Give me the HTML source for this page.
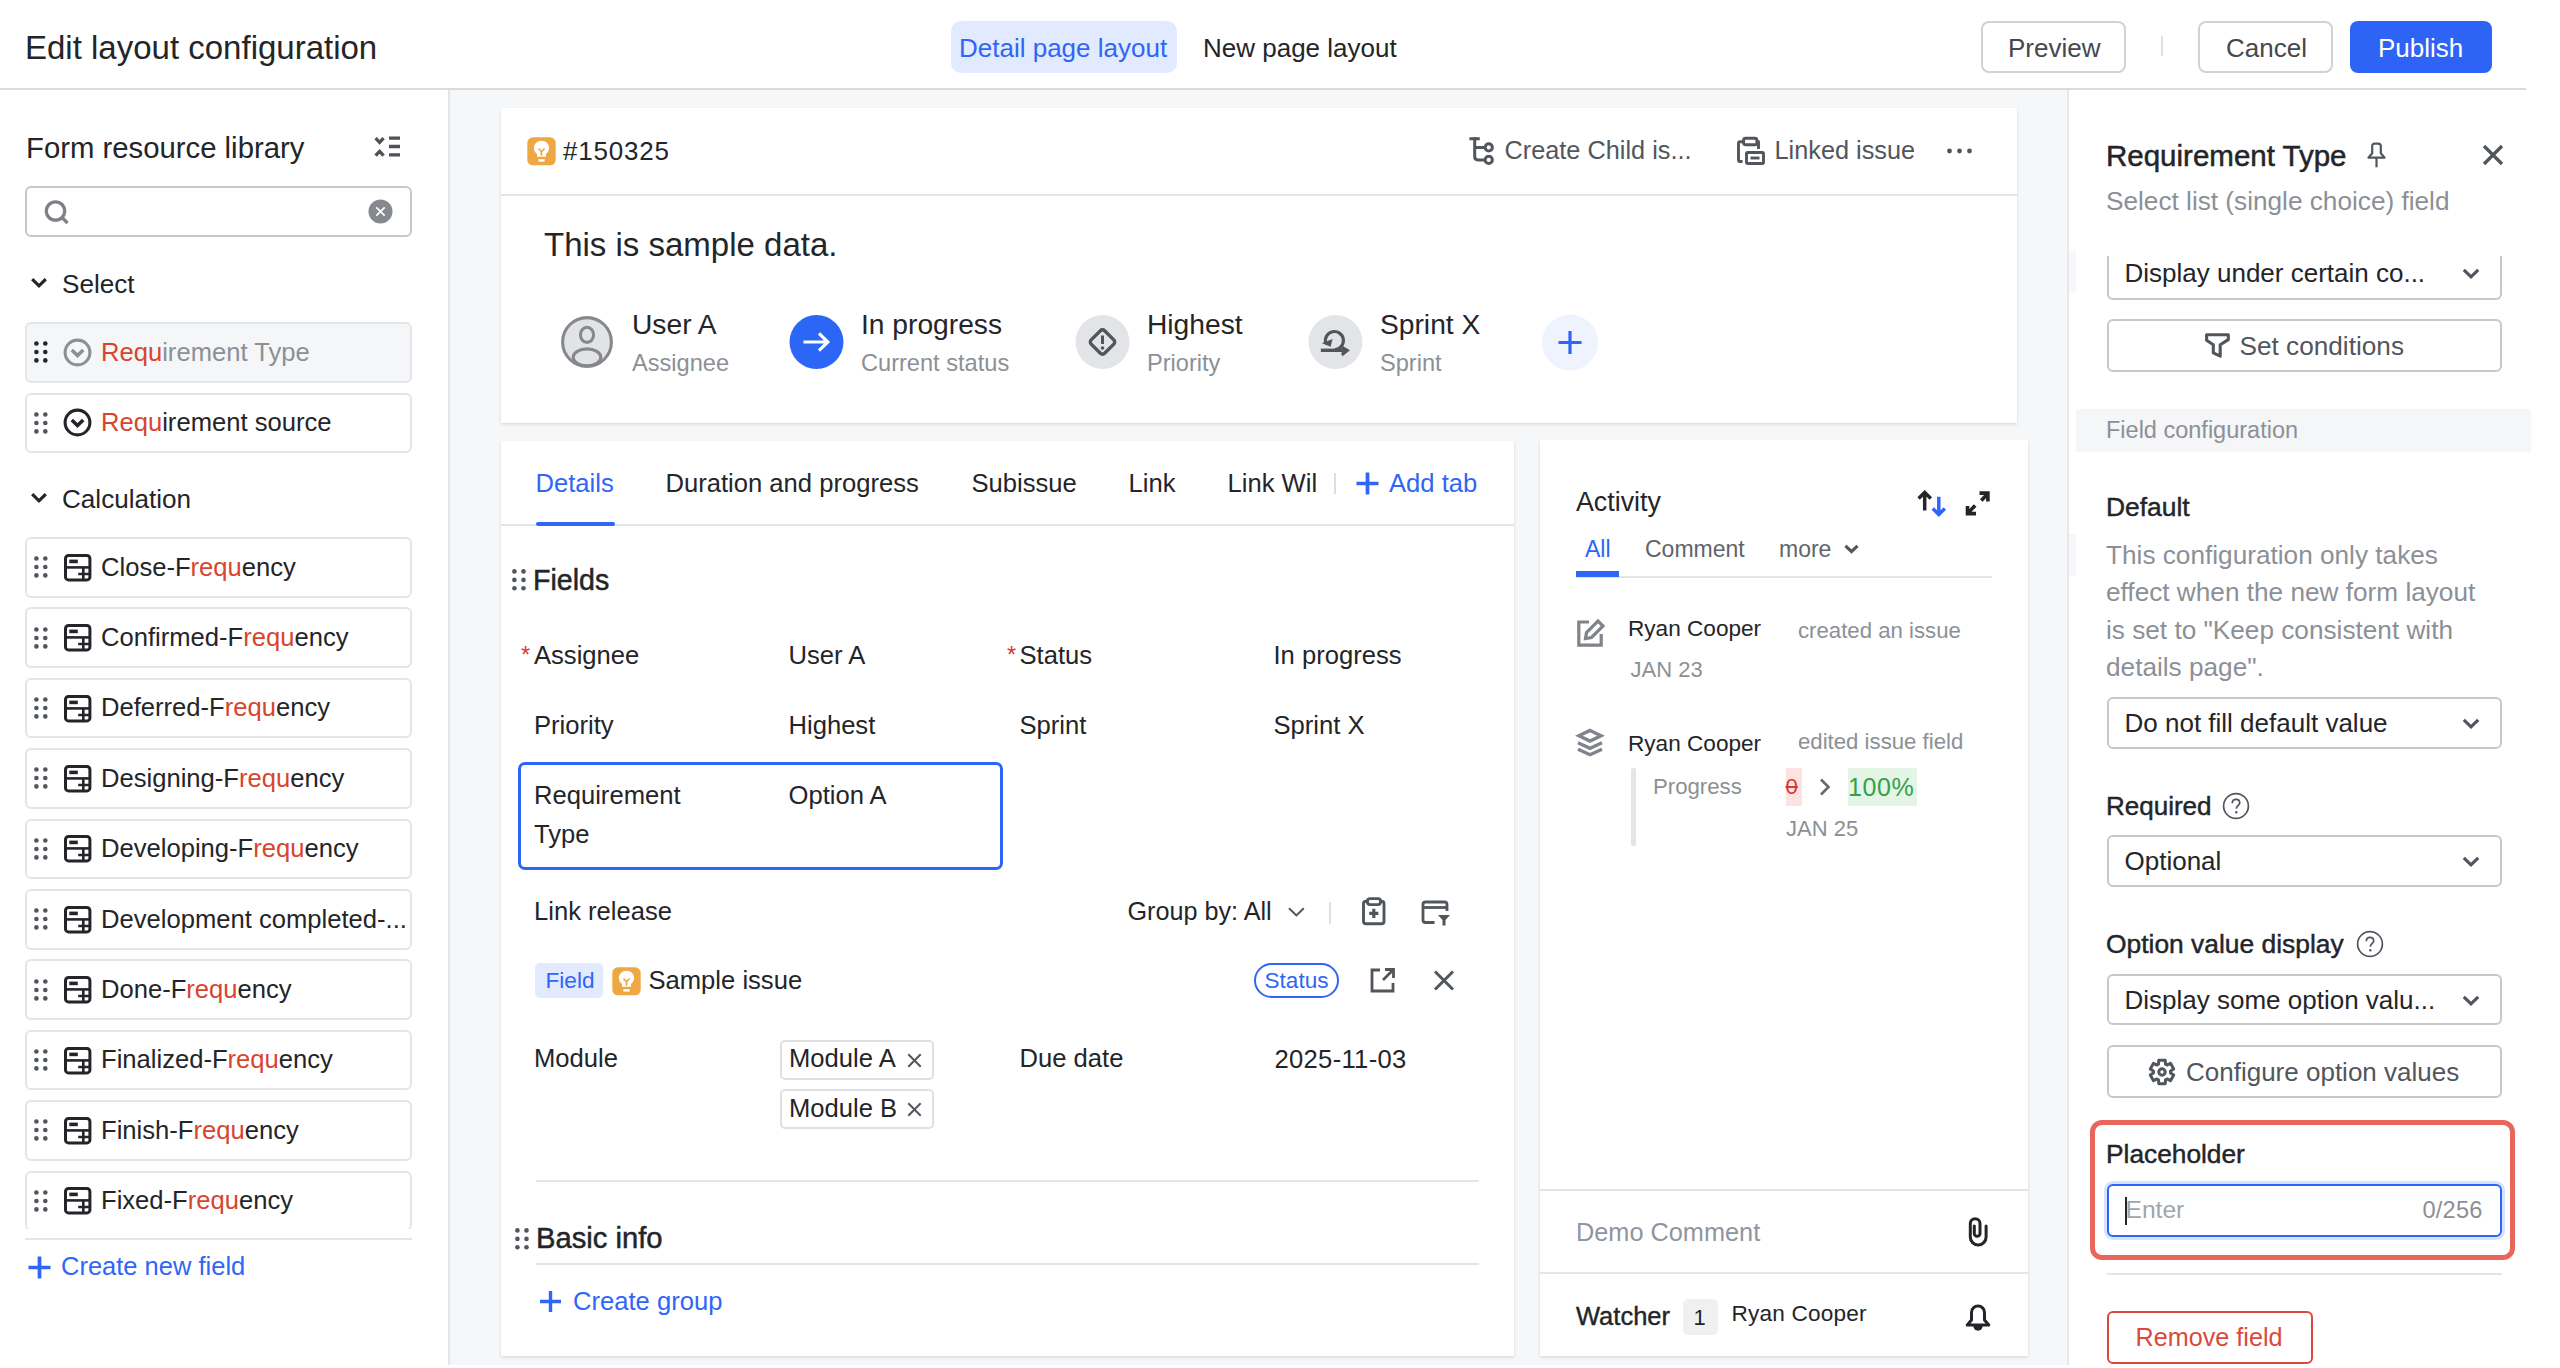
<!DOCTYPE html><html><head><meta charset="utf-8"><style>
html,body{margin:0;padding:0;width:2560px;height:1368px;overflow:hidden;background:#fff;font-family:"Liberation Sans",sans-serif;}
.t{position:absolute;white-space:nowrap;line-height:1;}
svg{display:block}
</style></head><body>
<div style="position:absolute;left:449px;top:90px;width:1619px;height:1275px;box-sizing:border-box;background:#f6f7f9;"></div>
<div style="position:absolute;left:448px;top:90px;width:2px;height:1275px;box-sizing:border-box;background:#e4e6e9;"></div>
<div style="position:absolute;left:2067px;top:90px;width:2px;height:1275px;box-sizing:border-box;background:#e6e8eb;"></div>
<div style="position:absolute;left:0px;top:88px;width:2526px;height:2px;box-sizing:border-box;background:#d9dbde;"></div>
<div class="t" style="left:25.0px;top:31.07px;font-size:33px;color:#232529;font-weight:400;">Edit layout configuration</div>
<div style="position:absolute;left:951px;top:21px;width:226px;height:52px;box-sizing:border-box;background:#e1eaff;border-radius:10px;"></div>
<div class="t" style="left:959.0px;top:34.99px;font-size:26px;color:#2f66f6;font-weight:400;">Detail page layout</div>
<div class="t" style="left:1203.0px;top:34.99px;font-size:26px;color:#232529;font-weight:400;">New page layout</div>
<div style="position:absolute;left:1981px;top:21px;width:145px;height:52px;box-sizing:border-box;border:2px solid #d0d3d6;border-radius:8px;"></div>
<div class="t" style="left:2008.0px;top:34.99px;font-size:26px;color:#45484d;font-weight:400;">Preview</div>
<div style="position:absolute;left:2161px;top:36px;width:2px;height:20px;box-sizing:border-box;background:#dee0e3;"></div>
<div style="position:absolute;left:2198px;top:21px;width:135px;height:52px;box-sizing:border-box;border:2px solid #d0d3d6;border-radius:8px;"></div>
<div class="t" style="left:2226.0px;top:34.99px;font-size:26px;color:#45484d;font-weight:400;">Cancel</div>
<div style="position:absolute;left:2350px;top:21px;width:142px;height:52px;box-sizing:border-box;background:#2d64f5;border-radius:8px;"></div>
<div class="t" style="left:2378.0px;top:34.99px;font-size:26px;color:#ffffff;font-weight:400;">Publish</div>
<div class="t" style="left:26.0px;top:132.60px;font-size:29.3px;color:#232529;font-weight:400;">Form resource library</div>
<svg style="position:absolute;left:374px;top:136px" width="28" height="22" viewBox="0 0 28 22" fill="none"><g stroke="#4e5258" stroke-width="3.4"><path d="M1.6 2.2L5.6 6.4L9.6 2.2"/><path d="M1.6 19.6L5.6 15.4L9.6 19.6"/><path d="M15 2.1H26M15 10.5H26M15 18.9H26"/></g></svg>
<div style="position:absolute;left:25px;top:186px;width:387px;height:51px;box-sizing:border-box;border:2px solid #c6c8cc;border-radius:6px;"></div>
<svg style="position:absolute;left:42px;top:198px" width="28" height="28" viewBox="0 0 28 28" fill="none"><circle cx="13.5" cy="13" r="9.2" stroke="#7d8086" stroke-width="3.2"/><path d="M20 19.5L25.5 25" stroke="#7d8086" stroke-width="3.2"/></svg>
<svg style="position:absolute;left:368px;top:199px" width="26" height="26" viewBox="0 0 26 26" fill="none"><circle cx="12.5" cy="12.5" r="12" fill="#86898e"/><path d="M8.3 8.3L16.7 16.7M16.7 8.3L8.3 16.7" stroke="#fff" stroke-width="1.7"/></svg>
<svg style="position:absolute;left:30px;top:277px" width="18" height="12" viewBox="0 0 18 12" fill="none"><path d="M2.2 2.2L9 8.8L15.8 2.2" stroke="#232529" stroke-width="3.2"/></svg>
<div class="t" style="left:62.0px;top:271.01px;font-size:26.1px;color:#232529;font-weight:400;">Select</div>
<div style="position:absolute;left:25px;top:322px;width:387px;height:60.5px;box-sizing:border-box;background:#f5f6f7;border:2px solid #e3e5e8;border-radius:6px;"></div>
<svg style="position:absolute;left:34px;top:341.2px" width="14" height="22" viewBox="0 0 14 22" fill="none"><circle cx="2.4" cy="2.5" r="2.3" fill="#232529"/><circle cx="2.4" cy="11" r="2.3" fill="#232529"/><circle cx="2.4" cy="19.4" r="2.3" fill="#232529"/><circle cx="11.3" cy="2.5" r="2.3" fill="#232529"/><circle cx="11.3" cy="11" r="2.3" fill="#232529"/><circle cx="11.3" cy="19.4" r="2.3" fill="#232529"/></svg>
<svg style="position:absolute;left:63px;top:337.7px" width="29" height="29" viewBox="0 0 29 29" fill="none"><circle cx="14.5" cy="14.5" r="12.4" stroke="#8c9096" stroke-width="3.1"/><path d="M8.8 12L14.5 17.5L20.2 12" stroke="#8c9096" stroke-width="3.6"/></svg>
<div class="t" style="left:101.0px;top:339.53px;font-size:25.6px;color:#8c9096;font-weight:400;"><span style="color:#d8452e">Requ</span>irement Type</div>
<div style="position:absolute;left:25px;top:392.5px;width:387px;height:60.5px;box-sizing:border-box;background:#ffffff;border:2px solid #e3e5e8;border-radius:6px;"></div>
<svg style="position:absolute;left:34px;top:411.7px" width="14" height="22" viewBox="0 0 14 22" fill="none"><circle cx="2.4" cy="2.5" r="2.3" fill="#51565d"/><circle cx="2.4" cy="11" r="2.3" fill="#51565d"/><circle cx="2.4" cy="19.4" r="2.3" fill="#51565d"/><circle cx="11.3" cy="2.5" r="2.3" fill="#51565d"/><circle cx="11.3" cy="11" r="2.3" fill="#51565d"/><circle cx="11.3" cy="19.4" r="2.3" fill="#51565d"/></svg>
<svg style="position:absolute;left:63px;top:408.2px" width="29" height="29" viewBox="0 0 29 29" fill="none"><circle cx="14.5" cy="14.5" r="12.4" stroke="#232529" stroke-width="3.1"/><path d="M8.8 12L14.5 17.5L20.2 12" stroke="#232529" stroke-width="3.6"/></svg>
<div class="t" style="left:101.0px;top:410.03px;font-size:25.6px;color:#232529;font-weight:400;"><span style="color:#d8452e">Requ</span>irement source</div>
<svg style="position:absolute;left:30px;top:492px" width="18" height="12" viewBox="0 0 18 12" fill="none"><path d="M2.2 2.2L9 8.8L15.8 2.2" stroke="#232529" stroke-width="3.2"/></svg>
<div class="t" style="left:62.0px;top:486.01px;font-size:26.1px;color:#232529;font-weight:400;">Calculation</div>
<div style="position:absolute;left:25px;top:537.0px;width:387px;height:60.5px;box-sizing:border-box;background:#ffffff;border:2px solid #e3e5e8;border-radius:6px;"></div>
<svg style="position:absolute;left:34px;top:556.2px" width="14" height="22" viewBox="0 0 14 22" fill="none"><circle cx="2.4" cy="2.5" r="2.3" fill="#51565d"/><circle cx="2.4" cy="11" r="2.3" fill="#51565d"/><circle cx="2.4" cy="19.4" r="2.3" fill="#51565d"/><circle cx="11.3" cy="2.5" r="2.3" fill="#51565d"/><circle cx="11.3" cy="11" r="2.3" fill="#51565d"/><circle cx="11.3" cy="19.4" r="2.3" fill="#51565d"/></svg>
<svg style="position:absolute;left:63px;top:552.7px" width="29" height="29" viewBox="0 0 29 29" fill="none"><rect x="2.5" y="2.5" width="24.4" height="24.4" rx="3" stroke="#232529" stroke-width="3"/><path d="M2.5 14.4H27" stroke="#232529" stroke-width="2.6"/><path d="M6.3 8.4H14.8" stroke="#232529" stroke-width="3.6"/><path d="M20.3 14.4V27M15.2 21H27" stroke="#232529" stroke-width="2.6"/></svg>
<div class="t" style="left:101.0px;top:554.53px;font-size:25.6px;color:#232529;font-weight:400;">Close-F<span style="color:#d8452e">requ</span>ency</div>
<div style="position:absolute;left:25px;top:607.4px;width:387px;height:60.5px;box-sizing:border-box;background:#ffffff;border:2px solid #e3e5e8;border-radius:6px;"></div>
<svg style="position:absolute;left:34px;top:626.6px" width="14" height="22" viewBox="0 0 14 22" fill="none"><circle cx="2.4" cy="2.5" r="2.3" fill="#51565d"/><circle cx="2.4" cy="11" r="2.3" fill="#51565d"/><circle cx="2.4" cy="19.4" r="2.3" fill="#51565d"/><circle cx="11.3" cy="2.5" r="2.3" fill="#51565d"/><circle cx="11.3" cy="11" r="2.3" fill="#51565d"/><circle cx="11.3" cy="19.4" r="2.3" fill="#51565d"/></svg>
<svg style="position:absolute;left:63px;top:623.1px" width="29" height="29" viewBox="0 0 29 29" fill="none"><rect x="2.5" y="2.5" width="24.4" height="24.4" rx="3" stroke="#232529" stroke-width="3"/><path d="M2.5 14.4H27" stroke="#232529" stroke-width="2.6"/><path d="M6.3 8.4H14.8" stroke="#232529" stroke-width="3.6"/><path d="M20.3 14.4V27M15.2 21H27" stroke="#232529" stroke-width="2.6"/></svg>
<div class="t" style="left:101.0px;top:624.93px;font-size:25.6px;color:#232529;font-weight:400;">Confirmed-F<span style="color:#d8452e">requ</span>ency</div>
<div style="position:absolute;left:25px;top:677.8px;width:387px;height:60.5px;box-sizing:border-box;background:#ffffff;border:2px solid #e3e5e8;border-radius:6px;"></div>
<svg style="position:absolute;left:34px;top:697.0px" width="14" height="22" viewBox="0 0 14 22" fill="none"><circle cx="2.4" cy="2.5" r="2.3" fill="#51565d"/><circle cx="2.4" cy="11" r="2.3" fill="#51565d"/><circle cx="2.4" cy="19.4" r="2.3" fill="#51565d"/><circle cx="11.3" cy="2.5" r="2.3" fill="#51565d"/><circle cx="11.3" cy="11" r="2.3" fill="#51565d"/><circle cx="11.3" cy="19.4" r="2.3" fill="#51565d"/></svg>
<svg style="position:absolute;left:63px;top:693.5px" width="29" height="29" viewBox="0 0 29 29" fill="none"><rect x="2.5" y="2.5" width="24.4" height="24.4" rx="3" stroke="#232529" stroke-width="3"/><path d="M2.5 14.4H27" stroke="#232529" stroke-width="2.6"/><path d="M6.3 8.4H14.8" stroke="#232529" stroke-width="3.6"/><path d="M20.3 14.4V27M15.2 21H27" stroke="#232529" stroke-width="2.6"/></svg>
<div class="t" style="left:101.0px;top:695.33px;font-size:25.6px;color:#232529;font-weight:400;">Deferred-F<span style="color:#d8452e">requ</span>ency</div>
<div style="position:absolute;left:25px;top:748.2px;width:387px;height:60.5px;box-sizing:border-box;background:#ffffff;border:2px solid #e3e5e8;border-radius:6px;"></div>
<svg style="position:absolute;left:34px;top:767.4000000000001px" width="14" height="22" viewBox="0 0 14 22" fill="none"><circle cx="2.4" cy="2.5" r="2.3" fill="#51565d"/><circle cx="2.4" cy="11" r="2.3" fill="#51565d"/><circle cx="2.4" cy="19.4" r="2.3" fill="#51565d"/><circle cx="11.3" cy="2.5" r="2.3" fill="#51565d"/><circle cx="11.3" cy="11" r="2.3" fill="#51565d"/><circle cx="11.3" cy="19.4" r="2.3" fill="#51565d"/></svg>
<svg style="position:absolute;left:63px;top:763.9000000000001px" width="29" height="29" viewBox="0 0 29 29" fill="none"><rect x="2.5" y="2.5" width="24.4" height="24.4" rx="3" stroke="#232529" stroke-width="3"/><path d="M2.5 14.4H27" stroke="#232529" stroke-width="2.6"/><path d="M6.3 8.4H14.8" stroke="#232529" stroke-width="3.6"/><path d="M20.3 14.4V27M15.2 21H27" stroke="#232529" stroke-width="2.6"/></svg>
<div class="t" style="left:101.0px;top:765.73px;font-size:25.6px;color:#232529;font-weight:400;">Designing-F<span style="color:#d8452e">requ</span>ency</div>
<div style="position:absolute;left:25px;top:818.6px;width:387px;height:60.5px;box-sizing:border-box;background:#ffffff;border:2px solid #e3e5e8;border-radius:6px;"></div>
<svg style="position:absolute;left:34px;top:837.8000000000001px" width="14" height="22" viewBox="0 0 14 22" fill="none"><circle cx="2.4" cy="2.5" r="2.3" fill="#51565d"/><circle cx="2.4" cy="11" r="2.3" fill="#51565d"/><circle cx="2.4" cy="19.4" r="2.3" fill="#51565d"/><circle cx="11.3" cy="2.5" r="2.3" fill="#51565d"/><circle cx="11.3" cy="11" r="2.3" fill="#51565d"/><circle cx="11.3" cy="19.4" r="2.3" fill="#51565d"/></svg>
<svg style="position:absolute;left:63px;top:834.3000000000001px" width="29" height="29" viewBox="0 0 29 29" fill="none"><rect x="2.5" y="2.5" width="24.4" height="24.4" rx="3" stroke="#232529" stroke-width="3"/><path d="M2.5 14.4H27" stroke="#232529" stroke-width="2.6"/><path d="M6.3 8.4H14.8" stroke="#232529" stroke-width="3.6"/><path d="M20.3 14.4V27M15.2 21H27" stroke="#232529" stroke-width="2.6"/></svg>
<div class="t" style="left:101.0px;top:836.13px;font-size:25.6px;color:#232529;font-weight:400;">Developing-F<span style="color:#d8452e">requ</span>ency</div>
<div style="position:absolute;left:25px;top:889.0px;width:387px;height:60.5px;box-sizing:border-box;background:#ffffff;border:2px solid #e3e5e8;border-radius:6px;"></div>
<svg style="position:absolute;left:34px;top:908.2px" width="14" height="22" viewBox="0 0 14 22" fill="none"><circle cx="2.4" cy="2.5" r="2.3" fill="#51565d"/><circle cx="2.4" cy="11" r="2.3" fill="#51565d"/><circle cx="2.4" cy="19.4" r="2.3" fill="#51565d"/><circle cx="11.3" cy="2.5" r="2.3" fill="#51565d"/><circle cx="11.3" cy="11" r="2.3" fill="#51565d"/><circle cx="11.3" cy="19.4" r="2.3" fill="#51565d"/></svg>
<svg style="position:absolute;left:63px;top:904.7px" width="29" height="29" viewBox="0 0 29 29" fill="none"><rect x="2.5" y="2.5" width="24.4" height="24.4" rx="3" stroke="#232529" stroke-width="3"/><path d="M2.5 14.4H27" stroke="#232529" stroke-width="2.6"/><path d="M6.3 8.4H14.8" stroke="#232529" stroke-width="3.6"/><path d="M20.3 14.4V27M15.2 21H27" stroke="#232529" stroke-width="2.6"/></svg>
<div class="t" style="left:101.0px;top:906.53px;font-size:25.6px;color:#232529;font-weight:400;">Development completed-...</div>
<div style="position:absolute;left:25px;top:959.4px;width:387px;height:60.5px;box-sizing:border-box;background:#ffffff;border:2px solid #e3e5e8;border-radius:6px;"></div>
<svg style="position:absolute;left:34px;top:978.6px" width="14" height="22" viewBox="0 0 14 22" fill="none"><circle cx="2.4" cy="2.5" r="2.3" fill="#51565d"/><circle cx="2.4" cy="11" r="2.3" fill="#51565d"/><circle cx="2.4" cy="19.4" r="2.3" fill="#51565d"/><circle cx="11.3" cy="2.5" r="2.3" fill="#51565d"/><circle cx="11.3" cy="11" r="2.3" fill="#51565d"/><circle cx="11.3" cy="19.4" r="2.3" fill="#51565d"/></svg>
<svg style="position:absolute;left:63px;top:975.1px" width="29" height="29" viewBox="0 0 29 29" fill="none"><rect x="2.5" y="2.5" width="24.4" height="24.4" rx="3" stroke="#232529" stroke-width="3"/><path d="M2.5 14.4H27" stroke="#232529" stroke-width="2.6"/><path d="M6.3 8.4H14.8" stroke="#232529" stroke-width="3.6"/><path d="M20.3 14.4V27M15.2 21H27" stroke="#232529" stroke-width="2.6"/></svg>
<div class="t" style="left:101.0px;top:976.93px;font-size:25.6px;color:#232529;font-weight:400;">Done-F<span style="color:#d8452e">requ</span>ency</div>
<div style="position:absolute;left:25px;top:1029.8px;width:387px;height:60.5px;box-sizing:border-box;background:#ffffff;border:2px solid #e3e5e8;border-radius:6px;"></div>
<svg style="position:absolute;left:34px;top:1049.0px" width="14" height="22" viewBox="0 0 14 22" fill="none"><circle cx="2.4" cy="2.5" r="2.3" fill="#51565d"/><circle cx="2.4" cy="11" r="2.3" fill="#51565d"/><circle cx="2.4" cy="19.4" r="2.3" fill="#51565d"/><circle cx="11.3" cy="2.5" r="2.3" fill="#51565d"/><circle cx="11.3" cy="11" r="2.3" fill="#51565d"/><circle cx="11.3" cy="19.4" r="2.3" fill="#51565d"/></svg>
<svg style="position:absolute;left:63px;top:1045.5px" width="29" height="29" viewBox="0 0 29 29" fill="none"><rect x="2.5" y="2.5" width="24.4" height="24.4" rx="3" stroke="#232529" stroke-width="3"/><path d="M2.5 14.4H27" stroke="#232529" stroke-width="2.6"/><path d="M6.3 8.4H14.8" stroke="#232529" stroke-width="3.6"/><path d="M20.3 14.4V27M15.2 21H27" stroke="#232529" stroke-width="2.6"/></svg>
<div class="t" style="left:101.0px;top:1047.33px;font-size:25.6px;color:#232529;font-weight:400;">Finalized-F<span style="color:#d8452e">requ</span>ency</div>
<div style="position:absolute;left:25px;top:1100.2px;width:387px;height:60.5px;box-sizing:border-box;background:#ffffff;border:2px solid #e3e5e8;border-radius:6px;"></div>
<svg style="position:absolute;left:34px;top:1119.4px" width="14" height="22" viewBox="0 0 14 22" fill="none"><circle cx="2.4" cy="2.5" r="2.3" fill="#51565d"/><circle cx="2.4" cy="11" r="2.3" fill="#51565d"/><circle cx="2.4" cy="19.4" r="2.3" fill="#51565d"/><circle cx="11.3" cy="2.5" r="2.3" fill="#51565d"/><circle cx="11.3" cy="11" r="2.3" fill="#51565d"/><circle cx="11.3" cy="19.4" r="2.3" fill="#51565d"/></svg>
<svg style="position:absolute;left:63px;top:1115.9px" width="29" height="29" viewBox="0 0 29 29" fill="none"><rect x="2.5" y="2.5" width="24.4" height="24.4" rx="3" stroke="#232529" stroke-width="3"/><path d="M2.5 14.4H27" stroke="#232529" stroke-width="2.6"/><path d="M6.3 8.4H14.8" stroke="#232529" stroke-width="3.6"/><path d="M20.3 14.4V27M15.2 21H27" stroke="#232529" stroke-width="2.6"/></svg>
<div class="t" style="left:101.0px;top:1117.73px;font-size:25.6px;color:#232529;font-weight:400;">Finish-F<span style="color:#d8452e">requ</span>ency</div>
<div style="position:absolute;left:25px;top:1170.6px;width:387px;height:60.5px;box-sizing:border-box;background:#ffffff;border:2px solid #e3e5e8;border-radius:6px;"></div>
<svg style="position:absolute;left:34px;top:1189.8px" width="14" height="22" viewBox="0 0 14 22" fill="none"><circle cx="2.4" cy="2.5" r="2.3" fill="#51565d"/><circle cx="2.4" cy="11" r="2.3" fill="#51565d"/><circle cx="2.4" cy="19.4" r="2.3" fill="#51565d"/><circle cx="11.3" cy="2.5" r="2.3" fill="#51565d"/><circle cx="11.3" cy="11" r="2.3" fill="#51565d"/><circle cx="11.3" cy="19.4" r="2.3" fill="#51565d"/></svg>
<svg style="position:absolute;left:63px;top:1186.3px" width="29" height="29" viewBox="0 0 29 29" fill="none"><rect x="2.5" y="2.5" width="24.4" height="24.4" rx="3" stroke="#232529" stroke-width="3"/><path d="M2.5 14.4H27" stroke="#232529" stroke-width="2.6"/><path d="M6.3 8.4H14.8" stroke="#232529" stroke-width="3.6"/><path d="M20.3 14.4V27M15.2 21H27" stroke="#232529" stroke-width="2.6"/></svg>
<div class="t" style="left:101.0px;top:1188.13px;font-size:25.6px;color:#232529;font-weight:400;">Fixed-F<span style="color:#d8452e">requ</span>ency</div>
<div style="position:absolute;left:20px;top:1228.5px;width:400px;height:10px;box-sizing:border-box;background:#fff;"></div>
<div style="position:absolute;left:25px;top:1238px;width:387px;height:2px;box-sizing:border-box;background:#e3e5e8;"></div>
<svg style="position:absolute;left:27px;top:1255px" width="25" height="25" viewBox="0 0 25 25" fill="none"><path d="M12.5 1.5V23.5M1.5 12.5H23.5" stroke="#2f66f6" stroke-width="3.7"/></svg>
<div class="t" style="left:61.0px;top:1254.41px;font-size:25.5px;color:#2f66f6;font-weight:400;">Create new field</div>
<div style="position:absolute;left:501px;top:108px;width:1516px;height:315px;box-sizing:border-box;background:#fff;box-shadow:0 1.5px 3px rgba(31,35,41,0.13), 0 0 1px rgba(31,35,41,0.08);"></div>
<div style="position:absolute;left:501px;top:194px;width:1516px;height:2px;box-sizing:border-box;background:#e3e5e8;"></div>
<svg style="position:absolute;left:527px;top:137px" width="29" height="29" viewBox="0 0 29 29" fill="none"><rect x="0.3" y="0.3" width="28.4" height="28" rx="5.5" fill="#eea843"/><path d="M14.5 3.8c-4.3 0-7.6 3.2-7.6 7.3 0 2.6 1.3 4.5 3.1 5.9v2.8h9v-2.8c1.8-1.4 3.1-3.3 3.1-5.9 0-4.1-3.3-7.3-7.6-7.3z" fill="#fff"/><path d="M11.4 11.5l3.1 3.3 3.1-3.3M14.5 14.8v4" stroke="#eea843" stroke-width="1.7"/><rect x="11.4" y="22.2" width="6.2" height="2.4" fill="#fff"/></svg>
<div class="t" style="left:563.0px;top:137.99px;font-size:26px;color:#232529;font-weight:400;letter-spacing:0.8px;">#150325</div>
<svg style="position:absolute;left:1467px;top:136px" width="30" height="30" viewBox="0 0 30 30" fill="none"><g stroke="#51565d" stroke-width="3" fill="none"><path d="M2.4 2.75H12.8"/><path d="M7.7 1.2V20.5Q7.7 23.9 11 23.9H17.6M7.7 11.4H17.6"/><circle cx="21.75" cy="11.4" r="3.6"/><circle cx="21.75" cy="23.9" r="3.6"/></g></svg>
<div class="t" style="left:1504.5px;top:138.48px;font-size:25.3px;color:#51565d;font-weight:400;">Create Child is...</div>
<svg style="position:absolute;left:1735px;top:135px" width="32" height="32" viewBox="0 0 32 32" fill="none"><g stroke="#51565d" stroke-width="2.9" fill="none" stroke-linejoin="round"><path d="M8.6 6.8H5Q3.5 6.8 3.5 8.3V25Q3.5 26.5 5 26.5H7.5"/><rect x="8.6" y="3.3" width="13.3" height="6.4" rx="2"/><path d="M21.9 6.8H23.5V14"/><rect x="11.5" y="17.5" width="17" height="11" rx="1.2"/><path d="M15.5 23H24.5"/></g></svg>
<div class="t" style="left:1774.5px;top:138.48px;font-size:25.3px;color:#51565d;font-weight:400;">Linked issue</div>
<svg style="position:absolute;left:1946px;top:145px" width="28" height="12" viewBox="0 0 28 12" fill="none"><circle cx="3.5" cy="6" r="2.4" fill="#51565d"/><circle cx="13.5" cy="6" r="2.4" fill="#51565d"/><circle cx="23.5" cy="6" r="2.4" fill="#51565d"/></svg>
<div class="t" style="left:544.0px;top:227.57px;font-size:33px;color:#232529;font-weight:400;">This is sample data.</div>
<svg style="position:absolute;left:560px;top:315px" width="54" height="54" viewBox="0 0 54 54" fill="none"><defs><clipPath id="avc"><circle cx="27" cy="27" r="24"/></clipPath></defs><circle cx="27" cy="27" r="24.4" fill="#e2e3e6" stroke="#86888c" stroke-width="3.1"/><g clip-path="url(#avc)"><ellipse cx="27" cy="19.8" rx="6.6" ry="7.6" stroke="#86888c" stroke-width="3.1" fill="none"/><ellipse cx="27" cy="42.3" rx="13.8" ry="8.4" stroke="#86888c" stroke-width="3.1" fill="none"/></g></svg>
<div class="t" style="left:632.0px;top:310.13px;font-size:28.2px;color:#232529;font-weight:400;">User A</div>
<div class="t" style="left:632.0px;top:352.32px;font-size:23.6px;color:#8c9096;font-weight:400;">Assignee</div>
<svg style="position:absolute;left:789px;top:315px" width="55" height="55" viewBox="0 0 55 55" fill="none"><circle cx="27.5" cy="27" r="27" fill="#2b66f6"/><path d="M14.5 27H39M30 18.3L38.8 27L30 35.7" stroke="#fff" stroke-width="3.2"/></svg>
<div class="t" style="left:861.0px;top:310.13px;font-size:28.2px;color:#232529;font-weight:400;">In progress</div>
<div class="t" style="left:861.0px;top:352.32px;font-size:23.6px;color:#8c9096;font-weight:400;">Current status</div>
<svg style="position:absolute;left:1075px;top:315px" width="55" height="55" viewBox="0 0 55 55" fill="none"><circle cx="27.5" cy="27" r="27" fill="#e3e4e7"/><rect x="18" y="17.5" width="19" height="19" rx="3" transform="rotate(45 27.5 27)" stroke="#51565d" stroke-width="3.4" fill="none"/><path d="M27.5 20.5V29" stroke="#51565d" stroke-width="3"/><circle cx="27.5" cy="33" r="1.8" fill="#51565d"/></svg>
<div class="t" style="left:1147.0px;top:310.13px;font-size:28.2px;color:#232529;font-weight:400;">Highest</div>
<div class="t" style="left:1147.0px;top:352.32px;font-size:23.6px;color:#8c9096;font-weight:400;">Priority</div>
<svg style="position:absolute;left:1308px;top:315px" width="55" height="55" viewBox="0 0 55 55" fill="none"><circle cx="27.5" cy="27" r="27" fill="#e3e4e7"/><path d="M17.8 28.2A9 9 0 1 1 27 34.5" stroke="#51565d" stroke-width="3.2" fill="none"/><path d="M13.8 28.3L22.6 31.8L24.6 24Z" fill="#51565d"/><path d="M12.8 35.3H37" stroke="#51565d" stroke-width="3.4"/><path d="M33.5 30.2L42 35.3L34.5 41.2L33 38.5L35.8 35.3L32 32.2Z" fill="#51565d"/></svg>
<div class="t" style="left:1380.0px;top:310.13px;font-size:28.2px;color:#232529;font-weight:400;">Sprint X</div>
<div class="t" style="left:1380.0px;top:352.32px;font-size:23.6px;color:#8c9096;font-weight:400;">Sprint</div>
<svg style="position:absolute;left:1541px;top:314px" width="58" height="58" viewBox="0 0 58 58" fill="none"><circle cx="29" cy="28.5" r="28" fill="#eef3fe"/><path d="M29 17V40M17.5 28.5H40.5" stroke="#2f66f6" stroke-width="3.2"/></svg>
<div style="position:absolute;left:501px;top:441px;width:1013px;height:915px;box-sizing:border-box;background:#fff;box-shadow:0 1.5px 3px rgba(31,35,41,0.13), 0 0 1px rgba(31,35,41,0.08);"></div>
<div style="position:absolute;left:501px;top:524px;width:1013px;height:2px;box-sizing:border-box;background:#e3e5e8;"></div>
<div class="t" style="left:535.5px;top:470.63px;font-size:25.6px;color:#2f66f6;font-weight:400;">Details</div>
<div style="position:absolute;left:536px;top:522px;width:78.5px;height:4px;box-sizing:border-box;background:#2f66f6;border-radius:2px;"></div>
<div class="t" style="left:665.5px;top:470.63px;font-size:25.6px;color:#232529;font-weight:400;">Duration and progress</div>
<div class="t" style="left:971.5px;top:470.63px;font-size:25.6px;color:#232529;font-weight:400;">Subissue</div>
<div class="t" style="left:1128.5px;top:470.63px;font-size:25.6px;color:#232529;font-weight:400;">Link</div>
<div class="t" style="left:1227.5px;top:470.63px;font-size:25.6px;color:#232529;font-weight:400;">Link Wil</div>
<div style="position:absolute;left:1334.3px;top:473px;width:1.6px;height:21px;box-sizing:border-box;background:#dcdee2;"></div>
<svg style="position:absolute;left:1355px;top:471px" width="25" height="25" viewBox="0 0 25 25" fill="none"><path d="M12.5 1.5V23.5M1.5 12.5H23.5" stroke="#2f66f6" stroke-width="3.7"/></svg>
<div class="t" style="left:1389.0px;top:470.63px;font-size:25.6px;color:#2f66f6;font-weight:400;">Add tab</div>
<svg style="position:absolute;left:512px;top:569px" width="14" height="22" viewBox="0 0 14 22" fill="none"><circle cx="2.4" cy="2.4" r="2.3" fill="#51565d"/><circle cx="2.4" cy="10.9" r="2.3" fill="#51565d"/><circle cx="2.4" cy="19.2" r="2.3" fill="#51565d"/><circle cx="11.5" cy="2.4" r="2.3" fill="#51565d"/><circle cx="11.5" cy="10.9" r="2.3" fill="#51565d"/><circle cx="11.5" cy="19.2" r="2.3" fill="#51565d"/></svg>
<div class="t" style="left:533.0px;top:565.79px;font-size:28.6px;color:#232529;font-weight:400;-webkit-text-stroke:0.5px #232529;">Fields</div>
<div class="t" style="left:521.0px;top:644.22px;font-size:23.6px;color:#d83931;font-weight:400;">*</div>
<div class="t" style="left:534.0px;top:642.83px;font-size:25.6px;color:#232529;font-weight:400;">Assignee</div>
<div class="t" style="left:788.5px;top:642.83px;font-size:25.6px;color:#232529;font-weight:400;">User A</div>
<div class="t" style="left:1007.0px;top:644.22px;font-size:23.6px;color:#d83931;font-weight:400;">*</div>
<div class="t" style="left:1019.5px;top:642.83px;font-size:25.6px;color:#232529;font-weight:400;">Status</div>
<div class="t" style="left:1273.5px;top:642.83px;font-size:25.6px;color:#232529;font-weight:400;">In progress</div>
<div class="t" style="left:534.0px;top:712.93px;font-size:25.6px;color:#232529;font-weight:400;">Priority</div>
<div class="t" style="left:788.5px;top:712.93px;font-size:25.6px;color:#232529;font-weight:400;">Highest</div>
<div class="t" style="left:1019.5px;top:712.93px;font-size:25.6px;color:#232529;font-weight:400;">Sprint</div>
<div class="t" style="left:1273.5px;top:712.93px;font-size:25.6px;color:#232529;font-weight:400;">Sprint X</div>
<div style="position:absolute;left:517.5px;top:761.5px;width:485px;height:108px;box-sizing:border-box;border:3.5px solid #2b66f6;border-radius:7px;"></div>
<div class="t" style="left:534.0px;top:783.23px;font-size:25.6px;color:#232529;font-weight:400;">Requirement</div>
<div class="t" style="left:534.0px;top:821.83px;font-size:25.6px;color:#232529;font-weight:400;">Type</div>
<div class="t" style="left:788.5px;top:783.23px;font-size:25.6px;color:#232529;font-weight:400;">Option A</div>
<div class="t" style="left:534.0px;top:899.43px;font-size:25.6px;color:#232529;font-weight:400;">Link release</div>
<div class="t" style="left:1127.5px;top:899.17px;font-size:25.2px;color:#232529;font-weight:400;">Group by: All</div>
<svg style="position:absolute;left:1287px;top:906px" width="19" height="12" viewBox="0 0 19 12" fill="none"><path d="M2 2.2L9.4 9.4L16.8 2.2" stroke="#51565d" stroke-width="2"/></svg>
<div style="position:absolute;left:1329px;top:902px;width:2px;height:22px;box-sizing:border-box;background:#dee0e3;"></div>
<svg style="position:absolute;left:1360px;top:896px" width="28" height="32" viewBox="0 0 28 32" fill="none"><g stroke="#51565d" stroke-width="2.9" fill="none" stroke-linejoin="round"><path d="M7.5 5.2H6Q3.5 5.2 3.5 7.7V25.3Q3.5 27.8 6 27.8H21.5Q24 27.8 24 25.3V7.7Q24 5.2 21.5 5.2H20.5"/><rect x="7.5" y="2.6" width="13" height="6" rx="2.5"/></g><path d="M13.8 12.8V22M9.2 17.4H18.4" stroke="#51565d" stroke-width="3.2"/></svg>
<svg style="position:absolute;left:1419px;top:898px" width="32" height="30" viewBox="0 0 32 30" fill="none"><g stroke="#51565d" stroke-width="2.8" fill="none"><path d="M15.5 24.5H6.5Q4 24.5 4 22V6.5Q4 4 6.5 4H25.5Q28 4 28 6.5V13"/><path d="M4 9.5H28"/></g><path d="M19 17H31L26.5 22V27.5H23.5V22Z" fill="#51565d"/></svg>
<div style="position:absolute;left:535px;top:963px;width:68px;height:35px;box-sizing:border-box;background:#e1eaff;border-radius:5px;"></div>
<div class="t" style="left:545.5px;top:969.57px;font-size:22.6px;color:#2f66f6;font-weight:400;">Field</div>
<svg style="position:absolute;left:612px;top:966.5px" width="29" height="29" viewBox="0 0 29 29" fill="none"><rect x="0.3" y="0.3" width="28.4" height="28" rx="5.5" fill="#eea843"/><path d="M14.5 3.8c-4.3 0-7.6 3.2-7.6 7.3 0 2.6 1.3 4.5 3.1 5.9v2.8h9v-2.8c1.8-1.4 3.1-3.3 3.1-5.9 0-4.1-3.3-7.3-7.6-7.3z" fill="#fff"/><path d="M11.4 11.5l3.1 3.3 3.1-3.3M14.5 14.8v4" stroke="#eea843" stroke-width="1.7"/><rect x="11.4" y="22.2" width="6.2" height="2.4" fill="#fff"/></svg>
<div class="t" style="left:648.5px;top:967.93px;font-size:25.6px;color:#232529;font-weight:400;">Sample issue</div>
<div style="position:absolute;left:1253.5px;top:963px;width:85.5px;height:35px;box-sizing:border-box;border:2px solid #2f66f6;border-radius:18px;"></div>
<div class="t" style="left:1264.5px;top:969.57px;font-size:22.6px;color:#2f66f6;font-weight:400;">Status</div>
<svg style="position:absolute;left:1368px;top:966px" width="30" height="29" viewBox="0 0 30 29" fill="none"><g stroke="#51565d" stroke-width="2.8" fill="none"><path d="M12 4H4V25H25V17"/><path d="M15 14L24.5 4.5M17 3.5H25.5V12"/></g></svg>
<svg style="position:absolute;left:1432px;top:969px" width="24" height="24" viewBox="0 0 24 24" fill="none"><path d="M3 2.5L21 20.5M21 2.5L3 20.5" stroke="#51565d" stroke-width="3"/></svg>
<div class="t" style="left:534.0px;top:1046.43px;font-size:25.6px;color:#232529;font-weight:400;">Module</div>
<div style="position:absolute;left:779.5px;top:1039.5px;width:154.5px;height:40.5px;box-sizing:border-box;border:2px solid #dee0e3;border-radius:5px;"></div>
<div class="t" style="left:789.0px;top:1046.43px;font-size:25.6px;color:#232529;font-weight:400;">Module A</div>
<svg style="position:absolute;left:906px;top:1052.0px" width="17" height="17" viewBox="0 0 17 17" fill="none"><path d="M2.3 2.3L14.7 14.7M14.7 2.3L2.3 14.7" stroke="#51565d" stroke-width="2"/></svg>
<div style="position:absolute;left:779.5px;top:1088.8px;width:154.5px;height:40.5px;box-sizing:border-box;border:2px solid #dee0e3;border-radius:5px;"></div>
<div class="t" style="left:789.0px;top:1095.83px;font-size:25.6px;color:#232529;font-weight:400;">Module B</div>
<svg style="position:absolute;left:906px;top:1101.3px" width="17" height="17" viewBox="0 0 17 17" fill="none"><path d="M2.3 2.3L14.7 14.7M14.7 2.3L2.3 14.7" stroke="#51565d" stroke-width="2"/></svg>
<div class="t" style="left:1019.5px;top:1046.43px;font-size:25.6px;color:#232529;font-weight:400;">Due date</div>
<div class="t" style="left:1274.5px;top:1046.53px;font-size:25.6px;color:#232529;font-weight:400;letter-spacing:0.3px;">2025-11-03</div>
<div style="position:absolute;left:536px;top:1180px;width:943px;height:2px;box-sizing:border-box;background:#e3e5e8;"></div>
<svg style="position:absolute;left:515px;top:1227.5px" width="14" height="22" viewBox="0 0 14 22" fill="none"><circle cx="2.4" cy="2.4" r="2.3" fill="#51565d"/><circle cx="2.4" cy="10.9" r="2.3" fill="#51565d"/><circle cx="2.4" cy="19.2" r="2.3" fill="#51565d"/><circle cx="11.5" cy="2.4" r="2.3" fill="#51565d"/><circle cx="11.5" cy="10.9" r="2.3" fill="#51565d"/><circle cx="11.5" cy="19.2" r="2.3" fill="#51565d"/></svg>
<div class="t" style="left:536.0px;top:1224.18px;font-size:29.2px;color:#232529;font-weight:400;-webkit-text-stroke:0.5px #232529;">Basic info</div>
<div style="position:absolute;left:536px;top:1262.5px;width:943px;height:2px;box-sizing:border-box;background:#e3e5e8;"></div>
<svg style="position:absolute;left:539px;top:1290px" width="24" height="23" viewBox="0 0 24 23" fill="none"><path d="M11.5 1V22M1 11.5H22" stroke="#2f66f6" stroke-width="3.4"/></svg>
<div class="t" style="left:573.0px;top:1288.73px;font-size:25.6px;color:#2f66f6;font-weight:400;">Create group</div>
<div style="position:absolute;left:1540px;top:440px;width:488px;height:916px;box-sizing:border-box;background:#fff;box-shadow:0 1.5px 3px rgba(31,35,41,0.13), 0 0 1px rgba(31,35,41,0.08);"></div>
<div class="t" style="left:1576.0px;top:489.31px;font-size:26.8px;color:#232529;font-weight:400;">Activity</div>
<svg style="position:absolute;left:1915px;top:489px" width="34" height="30" viewBox="0 0 34 30" fill="none"><path d="M9.7 21.5V4.5M3.6 9.6L9.7 3.5L15.8 9.6" stroke="#232529" stroke-width="3.5"/><path d="M23.8 7.8V25M17.8 19.6L23.8 25.6L29.8 19.6" stroke="#2f66f6" stroke-width="3.5"/></svg>
<svg style="position:absolute;left:1963px;top:489px" width="30" height="30" viewBox="0 0 30 30" fill="none"><g stroke="#232529" stroke-width="3.6" fill="none"><path d="M16.5 4.1H24.9V12.6M18.3 11.6L24.5 5"/><path d="M4.5 17V24.6H13M6.3 22.6L12.2 16.4"/></g></svg>
<div class="t" style="left:1585.0px;top:538.33px;font-size:23px;color:#2f66f6;font-weight:400;">All</div>
<div class="t" style="left:1645.0px;top:538.33px;font-size:23px;color:#60646b;font-weight:400;">Comment</div>
<div class="t" style="left:1779.0px;top:538.33px;font-size:23px;color:#60646b;font-weight:400;">more</div>
<svg style="position:absolute;left:1843px;top:543px" width="17" height="13" viewBox="0 0 17 13" fill="none"><path d="M2.5 2.8L8.5 8.6L14.5 2.8" stroke="#51565d" stroke-width="3.2"/></svg>
<div style="position:absolute;left:1576px;top:576px;width:416px;height:2px;box-sizing:border-box;background:#e3e5e8;"></div>
<div style="position:absolute;left:1576px;top:571px;width:42.5px;height:5.5px;box-sizing:border-box;background:#2f66f6;"></div>
<svg style="position:absolute;left:1575px;top:617px" width="30" height="32" viewBox="0 0 30 32" fill="none"><g stroke="#808389" stroke-width="3.2" fill="none"><path d="M14 5H3.8V28.2H26.2V17"/><path d="M10.5 21.5L11.5 15.5L23 4L28 9L16.5 20.5Z"/></g></svg>
<div class="t" style="left:1628.0px;top:617.87px;font-size:22.6px;color:#232529;font-weight:400;">Ryan Cooper</div>
<div class="t" style="left:1798.0px;top:620.21px;font-size:22.2px;color:#8c9096;font-weight:400;">created an issue</div>
<div class="t" style="left:1630.5px;top:659.38px;font-size:22px;color:#8c9096;font-weight:400;">JAN 23</div>
<svg style="position:absolute;left:1574px;top:726px" width="32" height="32" viewBox="0 0 32 32" fill="none"><g stroke="#808389" stroke-width="3.4" fill="none" stroke-linejoin="miter"><path d="M16 4.5L27 9.8L16 15L5 9.8Z"/><path d="M4 16.8L16 22.3L28 16.8"/><path d="M4 23.2L16 28.7L28 23.2"/></g></svg>
<div class="t" style="left:1628.0px;top:733.37px;font-size:22.6px;color:#232529;font-weight:400;">Ryan Cooper</div>
<div class="t" style="left:1798.0px;top:730.71px;font-size:22.2px;color:#8c9096;font-weight:400;">edited issue field</div>
<div style="position:absolute;left:1631px;top:768px;width:5px;height:78px;box-sizing:border-box;background:#e3e5e8;border-radius:2px;"></div>
<div class="t" style="left:1653.0px;top:775.71px;font-size:22.2px;color:#8c9096;font-weight:400;">Progress</div>
<div style="position:absolute;left:1786px;top:768px;width:16px;height:38px;box-sizing:border-box;background:#fde2e2;"></div>
<div class="t" style="left:1785.5px;top:776.21px;font-size:22.2px;color:#d83931;font-weight:400;"><s>0</s></div>
<svg style="position:absolute;left:1818px;top:777px" width="14" height="20" viewBox="0 0 14 20" fill="none"><path d="M3 2.5L10.5 10L3 17.5" stroke="#646a73" stroke-width="2.6"/></svg>
<div style="position:absolute;left:1848px;top:768px;width:69px;height:38px;box-sizing:border-box;background:#e4f5e6;"></div>
<div class="t" style="left:1848.0px;top:774.84px;font-size:25px;color:#34a14a;font-weight:400;letter-spacing:0.6px;">100%</div>
<div class="t" style="left:1786.0px;top:817.88px;font-size:22px;color:#8c9096;font-weight:400;">JAN 25</div>
<div style="position:absolute;left:1540px;top:1189px;width:488px;height:2px;box-sizing:border-box;background:#e3e5e8;"></div>
<div class="t" style="left:1576.0px;top:1219.58px;font-size:25.3px;color:#8f959e;font-weight:400;">Demo Comment</div>
<svg style="position:absolute;left:1964px;top:1216px" width="28" height="32" viewBox="0 0 28 32" fill="none"><path d="M10.3 10V17.5A2.85 2.85 0 0 0 16 17.5V7.6A4.85 4.85 0 0 0 6.3 7.6V21A7.9 7.9 0 0 0 22.1 21V10" stroke="#232529" stroke-width="3" fill="none" stroke-linecap="round"/></svg>
<div style="position:absolute;left:1540px;top:1272px;width:488px;height:2px;box-sizing:border-box;background:#e3e5e8;"></div>
<div class="t" style="left:1576.0px;top:1304.41px;font-size:25.5px;color:#232529;font-weight:400;-webkit-text-stroke:0.4px #232529;">Watcher</div>
<div style="position:absolute;left:1683px;top:1299px;width:35px;height:36px;box-sizing:border-box;background:#eff0f1;border-radius:5px;"></div>
<div class="t" style="left:1693.5px;top:1307.38px;font-size:22px;color:#232529;font-weight:400;">1</div>
<div class="t" style="left:1731.5px;top:1303.37px;font-size:22.6px;color:#232529;font-weight:400;letter-spacing:0.2px;">Ryan Cooper</div>
<svg style="position:absolute;left:1963px;top:1300px" width="30" height="32" viewBox="0 0 30 32" fill="none"><path d="M8.5 20V12.5A6.5 6.5 0 0 1 21.5 12.5V20L25.8 25H4.2Z" stroke="#232529" stroke-width="3" fill="none" stroke-linejoin="round"/><path d="M10.3 26A4.7 4.7 0 0 0 19.7 26Z" fill="#232529"/></svg>
<div style="position:absolute;left:2069px;top:251px;width:7px;height:41px;box-sizing:border-box;background:#f6f7f8;"></div>
<div style="position:absolute;left:2069px;top:534px;width:7px;height:42px;box-sizing:border-box;background:#f6f7f8;"></div>
<div class="t" style="left:2106.0px;top:141.13px;font-size:29.5px;color:#232529;font-weight:400;-webkit-text-stroke:0.5px #232529;">Requirement Type</div>
<svg style="position:absolute;left:2364px;top:141px" width="24" height="28" viewBox="0 0 24 28" fill="none"><path d="M8.2 12.2V5A2.3 2.3 0 0 1 10.5 2.7H14.5A2.3 2.3 0 0 1 16.8 5V12.2L20.6 16.6H4.4Z" stroke="#51565d" stroke-width="2.2" fill="none" stroke-linejoin="round"/><path d="M12.5 16.6V26.3" stroke="#51565d" stroke-width="2.2"/></svg>
<svg style="position:absolute;left:2481px;top:143px" width="24" height="24" viewBox="0 0 24 24" fill="none"><path d="M3 3L21 21M21 3L3 21" stroke="#51565d" stroke-width="3.3"/></svg>
<div class="t" style="left:2106.0px;top:187.52px;font-size:26.2px;color:#8c9096;font-weight:400;">Select list (single choice) field</div>
<div style="position:absolute;left:2107px;top:255.5px;width:395px;height:44px;box-sizing:border-box;border:2px solid #c6c8cc;border-top-width:0;border-radius:0 0 6px 6px;"></div>
<div class="t" style="left:2124.5px;top:260.39px;font-size:26px;color:#232529;font-weight:400;">Display under certain co...</div>
<svg style="position:absolute;left:2461px;top:267.4px" width="20" height="13" viewBox="0 0 20 13" fill="none"><path d="M2.8 2.8L10 9.8L17.2 2.8" stroke="#51565d" stroke-width="3.2"/></svg>
<div style="position:absolute;left:2107px;top:319.3px;width:395px;height:52.5px;box-sizing:border-box;border:2px solid #c6c8cc;border-radius:6px;"></div>
<svg style="position:absolute;left:2203px;top:331px" width="30" height="29" viewBox="0 0 30 29" fill="none"><path d="M3.6 3.8H25.3V8.6L17.2 13.8V25.2L10.3 21.9V13.8L3.6 9.2Z" stroke="#51565d" stroke-width="3.1" fill="none" stroke-linejoin="round"/></svg>
<div class="t" style="left:2239.5px;top:332.52px;font-size:26.2px;color:#51565d;font-weight:400;">Set conditions</div>
<div style="position:absolute;left:2076px;top:408.5px;width:455px;height:43px;box-sizing:border-box;background:#f5f6f7;"></div>
<div class="t" style="left:2106.0px;top:418.71px;font-size:23.5px;color:#8c9096;font-weight:400;">Field configuration</div>
<div class="t" style="left:2106.0px;top:493.75px;font-size:26.4px;color:#232529;font-weight:400;-webkit-text-stroke:0.45px #232529;">Default</div>
<div class="t" style="left:2106.0px;top:541.52px;font-size:26.2px;color:#8c9096;font-weight:400;">This configuration only takes</div>
<div class="t" style="left:2106.0px;top:579.12px;font-size:26.2px;color:#8c9096;font-weight:400;">effect when the new form layout</div>
<div class="t" style="left:2106.0px;top:616.72px;font-size:26.2px;color:#8c9096;font-weight:400;">is set to "Keep consistent with</div>
<div class="t" style="left:2106.0px;top:654.32px;font-size:26.2px;color:#8c9096;font-weight:400;">details page".</div>
<div style="position:absolute;left:2107px;top:696.7px;width:395px;height:52.6px;box-sizing:border-box;border:2px solid #c6c8cc;border-top-width:2px;border-radius:6px;"></div>
<div class="t" style="left:2124.5px;top:710.09px;font-size:26px;color:#232529;font-weight:400;">Do not fill default value</div>
<svg style="position:absolute;left:2461px;top:717.1px" width="20" height="13" viewBox="0 0 20 13" fill="none"><path d="M2.8 2.8L10 9.8L17.2 2.8" stroke="#51565d" stroke-width="3.2"/></svg>
<div class="t" style="left:2106.0px;top:793.19px;font-size:26px;color:#232529;font-weight:400;-webkit-text-stroke:0.45px #232529;">Required</div>
<svg style="position:absolute;left:2222px;top:791.5px" width="28" height="28" viewBox="0 0 28 28" fill="none"><circle cx="14" cy="14" r="12.4" stroke="#51565d" stroke-width="1.7" fill="none"/><path d="M10.3 11.2C10.3 8.9 12 7.4 14 7.4S17.7 8.8 17.7 10.9C17.7 13.3 14.3 13.6 14.3 16.8" stroke="#51565d" stroke-width="1.7" fill="none"/><circle cx="14.3" cy="20.2" r="1.2" fill="#51565d"/></svg>
<div style="position:absolute;left:2107px;top:835.1px;width:395px;height:52.2px;box-sizing:border-box;border:2px solid #c6c8cc;border-top-width:2px;border-radius:6px;"></div>
<div class="t" style="left:2124.5px;top:847.89px;font-size:26px;color:#232529;font-weight:400;">Optional</div>
<svg style="position:absolute;left:2461px;top:854.9px" width="20" height="13" viewBox="0 0 20 13" fill="none"><path d="M2.8 2.8L10 9.8L17.2 2.8" stroke="#51565d" stroke-width="3.2"/></svg>
<div class="t" style="left:2106.0px;top:931.05px;font-size:26.4px;color:#232529;font-weight:400;-webkit-text-stroke:0.45px #232529;">Option value display</div>
<svg style="position:absolute;left:2356px;top:930px" width="28" height="28" viewBox="0 0 28 28" fill="none"><circle cx="14" cy="14" r="12.4" stroke="#51565d" stroke-width="1.7" fill="none"/><path d="M10.3 11.2C10.3 8.9 12 7.4 14 7.4S17.7 8.8 17.7 10.9C17.7 13.3 14.3 13.6 14.3 16.8" stroke="#51565d" stroke-width="1.7" fill="none"/><circle cx="14.3" cy="20.2" r="1.2" fill="#51565d"/></svg>
<div style="position:absolute;left:2107px;top:973.8px;width:395px;height:51.7px;box-sizing:border-box;border:2px solid #c6c8cc;border-top-width:2px;border-radius:6px;"></div>
<div class="t" style="left:2124.5px;top:987.09px;font-size:26px;color:#232529;font-weight:400;">Display some option valu...</div>
<svg style="position:absolute;left:2461px;top:994.1px" width="20" height="13" viewBox="0 0 20 13" fill="none"><path d="M2.8 2.8L10 9.8L17.2 2.8" stroke="#51565d" stroke-width="3.2"/></svg>
<div style="position:absolute;left:2107px;top:1045.4px;width:395px;height:52.2px;box-sizing:border-box;border:2px solid #c6c8cc;border-radius:6px;"></div>
<svg style="position:absolute;left:2148.3px;top:1057.5px" width="28" height="28" viewBox="0 0 28 28" fill="none"><path d="M10.49 6.15L10.77 2.34L17.23 2.34L17.51 6.15L19.05 7.04L22.49 5.37L25.71 10.96L22.55 13.11L22.55 14.89L25.71 17.04L22.49 22.63L19.05 20.96L17.51 21.85L17.23 25.66L10.77 25.66L10.49 21.85L8.95 20.96L5.51 22.63L2.29 17.04L5.45 14.89L5.45 13.11L2.29 10.96L5.51 5.37L8.95 7.04Z" stroke="#51565d" stroke-width="3" fill="none" stroke-linejoin="round"/><circle cx="14" cy="14" r="3.2" stroke="#51565d" stroke-width="3" fill="none"/></svg>
<div class="t" style="left:2186.0px;top:1058.69px;font-size:26px;color:#51565d;font-weight:400;">Configure option values</div>
<div style="position:absolute;left:2089.5px;top:1120px;width:425.5px;height:140px;box-sizing:border-box;border:5.5px solid #e8665a;border-radius:12px;"></div>
<div class="t" style="left:2106.0px;top:1141.14px;font-size:26.3px;color:#232529;font-weight:400;-webkit-text-stroke:0.45px #232529;">Placeholder</div>
<div style="position:absolute;left:2104px;top:1180.5px;width:401px;height:59px;box-sizing:border-box;background:#d6e2ff;border-radius:9px;"></div>
<div style="position:absolute;left:2107px;top:1183.5px;width:395px;height:53px;box-sizing:border-box;background:#fff;border:2px solid #2b66f6;border-radius:6px;"></div>
<div style="position:absolute;left:2124.5px;top:1196.5px;width:2.5px;height:28.5px;box-sizing:border-box;background:#232529;"></div>
<div class="t" style="left:2125.5px;top:1197.98px;font-size:24.6px;color:#a0a5ad;font-weight:400;">Enter</div>
<div class="t" style="left:2422.5px;top:1198.82px;font-size:23.6px;color:#8c9096;font-weight:400;letter-spacing:0.2px;">0/256</div>
<div style="position:absolute;left:2107px;top:1273px;width:395px;height:2px;box-sizing:border-box;background:#e3e5e8;"></div>
<div style="position:absolute;left:2107.3px;top:1311.4px;width:205.6px;height:52.3px;box-sizing:border-box;border:2px solid #d94a3a;border-radius:6px;"></div>
<div class="t" style="left:2135.5px;top:1324.97px;font-size:25.2px;color:#d94a3a;font-weight:400;">Remove field</div>
</body></html>
